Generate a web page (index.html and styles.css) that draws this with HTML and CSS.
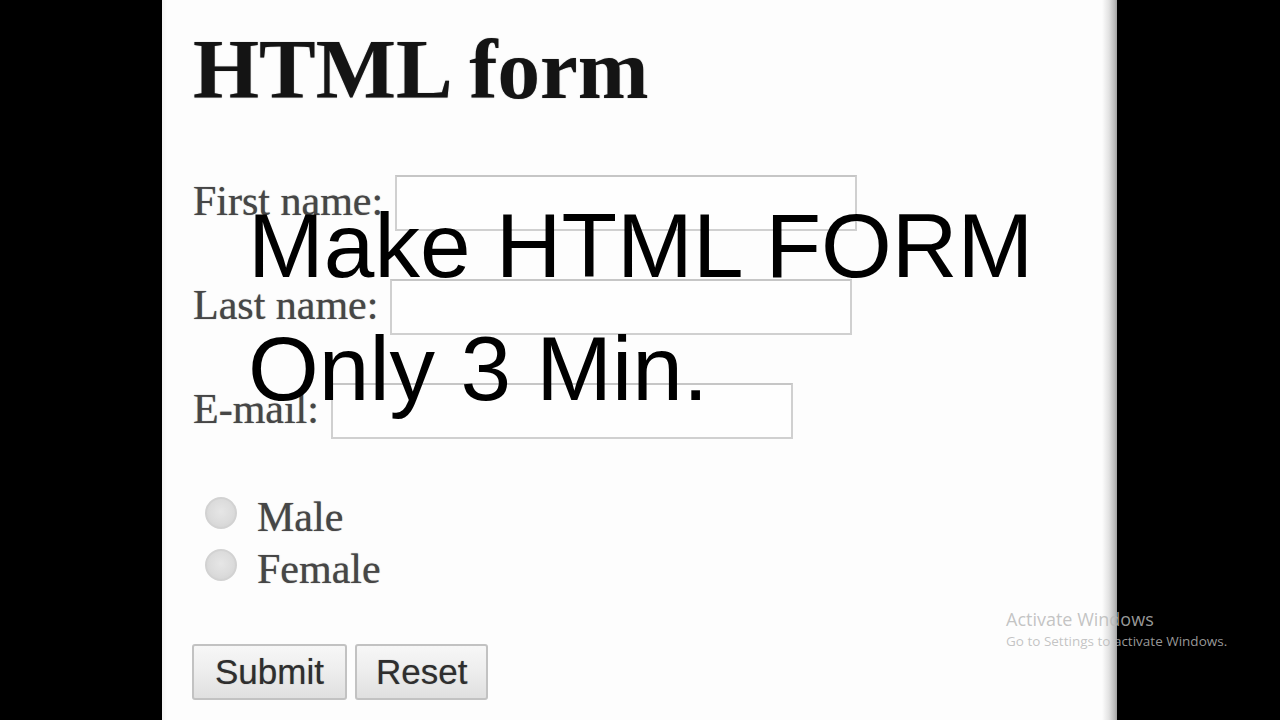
FILE: index.html
```html
<!DOCTYPE html>
<html lang="en">
<head>
<meta charset="utf-8">
<title>HTML form</title>
<link rel="stylesheet" href="styles.css">
</head>
<body>
<div class="stage">
  <div class="panel">
    <h1 class="title">HTML form</h1>
    <form class="form">
      <div class="row">
        <label class="lbl" for="fn">First name:</label>
        <input class="field" id="fn" type="text">
      </div>
      <div class="row">
        <label class="lbl" for="ln">Last name:</label>
        <input class="field" id="ln" type="text">
      </div>
      <div class="row">
        <label class="lbl" for="em">E-mail:</label>
        <input class="field" id="em" type="text">
      </div>
      <div class="radios">
        <label class="radio-row"><input class="radio" type="radio" name="g"><span>Male</span></label>
        <label class="radio-row"><input class="radio" type="radio" name="g"><span>Female</span></label>
      </div>
      <div class="buttons">
        <button class="btn" type="button">Submit</button>
        <button class="btn btn-reset" type="button">Reset</button>
      </div>
    </form>
  </div>
  <div class="overlay">Make HTML FORM<br>Only 3 Min.</div>
  <div class="watermark">
    <div class="wm-title">Activate Windows</div>
    <div class="wm-sub">Go to Settings to activate Windows.</div>
  </div>
</div>
</body>
</html>
```
FILE: styles.css
```css
html, body {
  margin: 0;
  padding: 0;
  background: #000;
}
.stage {
  position: relative;
  width: 1280px;
  height: 720px;
  overflow: hidden;
  background: #000;
}
.panel {
  margin-left: 162px;
  width: 955px;
  height: 720px;
  box-sizing: border-box;
  padding: 20px 0 0 31px;
  background: linear-gradient(to right, #f4f4f4 0, #fdfdfd 5px, #fdfdfd calc(100% - 15px), #e2e2e2 calc(100% - 8px), #b8b8b8 calc(100% - 2px), #a0a0a0 100%);
}
.title {
  margin: 0;
  font-family: "Liberation Serif", "Times New Roman", serif;
  font-weight: bold;
  font-size: 85px;
  line-height: normal;
  color: #141414;
  text-shadow: 0 0 1px rgba(20, 20, 20, 0.5);
}
.form {
  margin-top: 57px;
  font-family: "Liberation Serif", "Times New Roman", serif;
  font-size: 42px;
  color: #464646;
}
.row {
  display: flex;
  align-items: center;
  gap: 12px;
  height: 56px;
  margin-bottom: 48px;
}
.lbl {
  white-space: nowrap;
  text-shadow: 0 0 1px rgba(60, 60, 60, 0.7);
  position: relative;
  top: -2px;
}
.field {
  width: 462px;
  height: 56px;
  box-sizing: border-box;
  border: 2px solid #d0d0d0;
  border-top-color: #c6c6c6;
  background: #fefefe;
  margin: 0;
  padding: 0;
}
.radios {
  display: flex;
  flex-direction: column;
  margin-top: 52px;
}
.radio-row {
  display: flex;
  align-items: center;
  height: 52px;
  padding-left: 12px;
  gap: 20px;
  text-shadow: 0 0 1px rgba(60, 60, 60, 0.7);
}
.radio {
  appearance: none;
  -webkit-appearance: none;
  width: 32px;
  height: 32px;
  margin: 0;
  border-radius: 50%;
  border: 2px solid #d2d2d2;
  background: radial-gradient(circle at 50% 45%, #e6e6e6 0, #dcdcdc 55%, #d0d0d0 100%);
  box-sizing: border-box;
  position: relative;
  top: -4px;
}
.buttons {
  display: flex;
  gap: 8px;
  margin-top: 49px;
  margin-left: -1px;
}
.btn {
  height: 56px;
  padding: 0 21px;
  font-family: "Liberation Sans", Arial, sans-serif;
  font-size: 35px;
  color: #2e2e2e;
  background: linear-gradient(to bottom, #f7f7f7 0, #ededed 50%, #e0e0e0 100%);
  border: 2px solid #c2c2c2;
  border-radius: 3px;
  text-shadow: 0 0 1px rgba(60, 60, 60, 0.5);
}
.btn-reset {
  padding: 0 19px;
}
.overlay {
  position: absolute;
  left: 248px;
  top: 184px;
  font-family: "Liberation Sans", Arial, sans-serif;
  font-size: 91px;
  line-height: 123px;
  color: #000;
  white-space: nowrap;
}
.watermark {
  position: absolute;
  left: 1006px;
  top: 607px;
  font-family: "Open Sans", "Noto Sans", sans-serif;
  color: rgba(184, 184, 184, 0.84);
  white-space: nowrap;
}
.wm-title {
  font-size: 18px;
  line-height: 25px;
}
.wm-sub {
  font-size: 13.5px;
  line-height: 19px;
}
```
